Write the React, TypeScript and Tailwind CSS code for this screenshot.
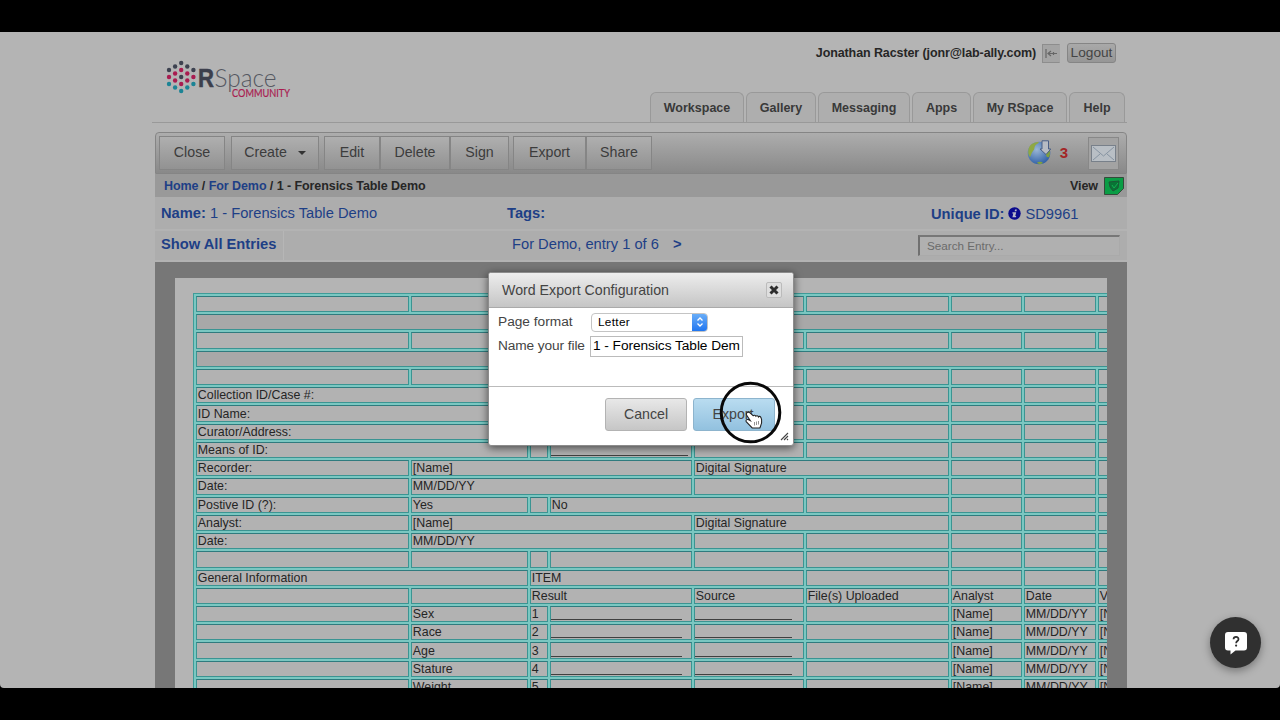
import React from "react";

type Cell = { span: number; text?: string; line?: string; shade?: boolean };

const e = (span = 1): Cell => ({ span });
const t = (text: string, span = 1): Cell => ({ span, text });
const LONG = "w-[137px]";
const MID = "w-[131px]";
const SHORT = "w-[97px]";

const plain: Cell[] = [e(), e(), e(), e(), e(), e(), e(), e(), e()];
const full: Cell[] = [{ span: 9, shade: true }];
const wide = (label: string): Cell[] => [t(label, 4), e(), e(), e(), e(), e()];
const signed = (label: string): Cell[] => [t(label), t("[Name]", 3), t("Digital Signature", 2), e(), e(), e()];
const dated: Cell[] = [t("Date:"), t("MM/DD/YY", 3), e(), e(), e(), e(), e()];
const item = (label: string, n: string): Cell[] => [
  e(), t(label), t(n), { span: 1, line: MID }, { span: 1, line: SHORT }, e(), t("[Name]"), t("MM/DD/YY"), t("[Name]"),
];

const rows: Cell[][] = [
  [e(), e(4), e(), e(), e(), e()],
  full,
  [e(), e(4), e(), e(), e(), e()],
  full,
  [e(), e(4), e(), e(), e(), e()],
  wide("Collection ID/Case #:"),
  wide("ID Name:"),
  wide("Curator/Address:"),
  [t("Means of ID:", 2), e(), { span: 1, line: LONG }, e(), e(), e(), e(), e()],
  signed("Recorder:"),
  dated,
  [t("Postive ID (?):"), t("Yes"), e(), t("No", 2), e(), e(), e(), e()],
  signed("Analyst:"),
  dated,
  plain,
  [t("General Information", 2), t("ITEM", 3), e(), e(), e(), e()],
  [e(), e(), t("Result", 2), t("Source"), t("File(s) Uploaded"), t("Analyst"), t("Date"), t("Verified")],
  item("Sex", "1"),
  item("Race", "2"),
  item("Age", "3"),
  item("Stature", "4"),
  item("Weight", "5"),
];

const spans: Record<number, string> = {
  1: "col-span-1", 2: "col-span-2", 3: "col-span-3", 4: "col-span-4", 9: "col-span-9",
};

function FormTable() {
  return (
    <div className="ml-[18px] mt-[15px] w-[1000px] border border-[#3f9c99] bg-[#7ac7c1] p-[2px]">
      <div className="grid auto-rows-[16.235px] grid-cols-[213px_117px_18px_142px_110px_143px_71px_72px_80px] gap-[2px]">
        {rows.flatMap((row, r) =>
          row.map((c, i) => (
            <div
              key={`${r}-${i}`}
              className={`${spans[c.span]} ${c.shade ? "bg-[#a8a8a8]" : "bg-[#b2b2b2]"} flex items-center overflow-hidden whitespace-nowrap border border-[#3b9492] border-t-[#2f7b7e] text-[12.4px] leading-[14px] text-[#252525]`}
            >
              {c.text && <span className="pl-[0.8px]">{c.text}</span>}
              {c.line && <span className={`${c.line} mb-px h-px self-end bg-[#404040]`} />}
            </div>
          ))
        )}
      </div>
    </div>
  );
}

const hex = [
  [2, 0, 0], [1, 1, 0], [3, 1, 0], [0, 2, 0], [2, 2, 1], [4, 2, 0],
  [1, 3, 1], [3, 3, 1], [0, 4, 1], [2, 4, 0], [4, 4, 1], [1, 5, 1], [3, 5, 1],
  [0, 6, 2], [2, 6, 1], [4, 6, 2], [1, 7, 2], [3, 7, 2], [2, 8, 2],
];
const hexColors = ["#3d4250", "#a91c50", "#1c8495"];

function Logo() {
  return (
    <svg width="128" height="42" viewBox="0 0 128 42" className="block">
      {hex.map(([x, y, c], i) => (
        <circle key={i} cx={5 + x * 6.1} cy={4 + y * 3.5} r="2.2" fill={hexColors[c]} />
      ))}
      <text x="34" y="27.500" fontFamily="Liberation Sans, sans-serif" fontWeight="bold" fontSize="26" textLength="16" lengthAdjust="spacingAndGlyphs" fill="#3c3f4c" stroke="#3c3f4c" strokeWidth=".5">R</text>
      <text x="50.500" y="27.500" fontFamily="Lato, sans-serif" fontWeight="300" fontSize="26" textLength="62" lengthAdjust="spacingAndGlyphs" fill="#555861">Space</text>
      <text x="68" y="38" fontFamily="Lato, sans-serif" fontSize="10.500" textLength="58" lengthAdjust="spacingAndGlyphs" fill="#a91c50" stroke="#a91c50" strokeWidth=".2">COMMUNITY</text>
    </svg>
  );
}

function Tab({ label, w }: { label: string; w: string }) {
  return (
    <div className={`${w} flex h-[30px] items-center justify-center rounded-t-md border border-b-0 border-[#999] bg-[#aeaeae] pt-px text-[12.5px] font-bold text-[#393939]`}>
      {label}
    </div>
  );
}

function Tool({ label, w, caret }: { label: string; w: string; caret?: boolean }) {
  return (
    <div className={`${w} flex h-[34px] items-center justify-center border border-[#858585] bg-linear-to-b from-[#afafaf] to-[#929292] text-[14.2px] text-[#3c3c3c]`}>
      {label}
      {caret && <span className="ml-[11px] h-0 w-0 border-x-4 border-t-4 border-x-transparent border-t-[#333]" />}
    </div>
  );
}

function Globe() {
  return (
    <svg width="24" height="26" viewBox="0 0 24 26">
      <defs>
        <radialGradient id="sea" cx=".4" cy=".35" r=".7">
          <stop offset="0" stopColor="#9bb7d6" />
          <stop offset="1" stopColor="#2d5da4" />
        </radialGradient>
      </defs>
      <circle cx="12" cy="13" r="11.300" fill="url(#sea)" />
      <path d="M1.500 9C3 4 7 2 12 2c-1 2-3 2-4 4s0 3-2 5-2 5-3 6c-2-2-2-5-1.500-8z" fill="#8fa843" />
      <path d="M20 6c3 3 4 8 2 11-2 1-3-1-3-3s2-4 1-8zM10 23c2-2 5-1 6 0-2 1.500-4 1.500-6 0z" fill="#7f9f40" />
      <path d="M15 .8h6.500V9h2.300L19 14.500 13 9h2z" fill="#b7bbc3" stroke="#4b5e85" strokeWidth="1" />
    </svg>
  );
}

function Dialog() {
  return (
    <div className="absolute left-[488px] top-[272px] flex h-[174px] w-[306px] flex-col rounded-[3px] border border-[#8c8c8c] bg-white text-[#444] shadow-[0_2px_8px_rgba(0,0,0,0.6)]">
      <div className="flex h-[35px] items-center justify-between rounded-t-[2px] border-b border-[#aaa] bg-linear-to-b from-[#ededed] to-[#c5c5c5] pl-[13px] pr-[11px]">
        <span className="pt-[2px] text-[14.2px]">Word Export Configuration</span>
        <span className="flex h-4 w-4 items-center justify-center rounded-[2px] border border-[#bbb] bg-[#dedede]">
          <svg width="10" height="10" viewBox="0 0 10 10"><path d="M1.500 1.500l7 7M8.500 1.500l-7 7" stroke="#2d2d2d" strokeWidth="3" /></svg>
        </span>
      </div>
      <div className="flex h-[78px] flex-col pl-[9px] pt-[4px] text-[13.7px]">
        <div className="flex h-[20px] items-center">
          <span className="w-[93px] pt-px">Page format</span>
          <span className="flex h-[19px] w-[117px] items-center justify-between overflow-hidden rounded-[4px] border border-[#c4c4c4] pl-[6px] text-[11.800px] tracking-[0.3px] text-black">
            <span className="pt-px">Letter</span>
            <span className="-mr-px flex h-[19px] w-[16px] items-center justify-center rounded-r-[4px] bg-linear-to-b from-[#6cb0f8] to-[#1a72ef]">
              <svg width="8" height="12" viewBox="0 0 8 12"><path d="M1.500 4.500L4 2l2.500 2.500M1.500 7.500L4 10l2.500-2.500" fill="none" stroke="white" strokeWidth="1.300" /></svg>
            </span>
          </span>
        </div>
        <div className="mt-[4px] flex h-[21px] items-center">
          <span className="w-[92px] whitespace-nowrap tracking-[-0.1px]">Name your file</span>
          <span className="h-[21px] w-[153px] overflow-hidden whitespace-nowrap border border-[#bbb] pl-[2px] leading-[18px] tracking-[-0.05px] text-black">1 - Forensics Table Dem</span>
        </div>
      </div>
      <div className="flex h-[59px] gap-[6px] border-t border-[#bbb] pl-[116px] pt-[11px] text-[14.2px]">
        <div className="flex h-[33px] w-[82px] items-center justify-center rounded-[3px] border border-[#b3b3b3] bg-linear-to-b from-[#e8e8e8] to-[#c6c6c6] pt-px">Cancel</div>
        <div className="flex h-[33px] w-[82px] items-center justify-center rounded-[3px] border border-[#8db4cd] bg-linear-to-b from-[#b9dcf0] to-[#92c1df] pr-[2px] pt-px">Export</div>
      </div>
      <svg className="absolute bottom-[4px] right-[4px]" width="9" height="9" viewBox="0 0 9 9"><path d="M1 8L8 1M4 8l4-4M7 8l1-1" stroke="#444" strokeWidth="1.100" /></svg>
      <svg className="absolute left-[230px] top-[108px]" width="64" height="64" viewBox="0 0 64 64">
        <circle cx="31.500" cy="31.500" r="29.300" fill="none" stroke="#080808" strokeWidth="3" />
        <path d="M28.500 31.500c-1.300.5-1.500 1.800-.8 2.800l3.600 5.300-2.200-1c-1.600-.6-2.800.9-1.700 2.200l5.800 6.200h7.600c1.200-2.800 2.500-4.700 1.800-8.300l-.6-2c-.6-1.600-2-1.700-2.600-.8-.4-1.300-1.900-1.500-2.500-.7-.6-1.200-2-1.300-2.700-.5l-3.200-2.800c-.7-.6-1.600-.8-2.500-.4z" fill="#fff" stroke="#222" strokeWidth="1.100" />
        <path d="M35.500 41v3.500M37.500 40.500V44M39.500 40v3.500" stroke="#777" strokeWidth=".8" />
      </svg>
    </div>
  );
}

export default function App() {
  return (
    <div className="relative flex h-[720px] w-[1280px] flex-col overflow-hidden bg-black py-8 font-['Liberation_Sans',Arial,sans-serif]">
      <div className="flex h-[656px] flex-col items-center overflow-hidden rounded-b-[4px] bg-[#b4b4b4]">
        <header className="mr-px flex h-[91px] w-[975px] shrink-0 justify-between border-b border-[#999]">
          <div className="pl-[12px] pt-[27px]"><Logo /></div>
          <div className="flex flex-col items-end justify-between">
            <div className="mr-[11px] mt-[11px] flex h-5 items-center">
              <span className="mr-[6px] pt-px text-[12.5px] font-bold tracking-[-0.1px] text-[#262626]">Jonathan Racster (jonr@lab-ally.com)</span>
              <span className="mr-[7px] flex h-[19px] w-[18px] items-center justify-center border border-[#8d8d8d] border-r-transparent bg-[#a4a4a4]">
                <svg width="12" height="9" viewBox="0 0 12 9"><path d="M1 0v9M3 4.500h9M6 2L3 4.500 6 7M8.500 3v3" fill="none" stroke="#666" strokeWidth="1.200" /></svg>
              </span>
              <span className="flex h-[20px] w-[49px] items-center justify-center rounded-[3px] border border-[#858585] bg-linear-to-b from-[#a9a9a9] to-[#969696] pt-px text-[13.7px] text-[#444]">Logout</span>
            </div>
            <div className="mr-[2px] flex gap-[2px]">
              <Tab label="Workspace" w="w-[94px]" />
              <Tab label="Gallery" w="w-[70px]" />
              <Tab label="Messaging" w="w-[92px]" />
              <Tab label="Apps" w="w-[59px]" />
              <Tab label="My RSpace" w="w-[94px]" />
              <Tab label="Help" w="w-[56px]" />
            </div>
          </div>
        </header>
        <main className="mt-[9px] flex min-h-0 w-[972px] flex-1 translate-x-[1px] flex-col">
          <div className="flex h-[42px] shrink-0 items-center justify-between rounded-t-[4px] border border-[#858585] bg-linear-to-b from-[#adadad] to-[#898989] pl-[3px] pr-[7px]">
            <div className="flex items-center">
              <Tool label="Close" w="w-[66px]" />
              <div className="w-[6px]" />
              <Tool label="Create" w="w-[88px]" caret />
              <div className="w-[5px]" />
              <Tool label="Edit" w="w-[56px]" />
              <Tool label="Delete" w="w-[70px]" />
              <Tool label="Sign" w="w-[59px]" />
              <div className="w-[4px]" />
              <Tool label="Export" w="w-[73px]" />
              <Tool label="Share" w="w-[66px]" />
            </div>
            <div className="flex items-center">
              <Globe />
              <span className="ml-[9px] mr-[20px] text-[15px] font-bold text-[#a32626]">3</span>
              <span className="flex h-[33px] w-[31px] items-center justify-center border border-[#888] bg-[#a3a3a3]">
                <svg width="25" height="17" viewBox="0 0 25 17"><rect x=".5" y=".5" width="24" height="16" fill="#b9bfc5" stroke="#78808a" /><path d="M2 2l10.500 9L23 2M2 15l7-6M23 15l-7-6" fill="none" stroke="#8794a2" /></svg>
              </span>
            </div>
          </div>
          <div className="flex h-[23px] shrink-0 items-center justify-between bg-[#999] pl-[9px] pr-[3px] text-[12.5px] font-bold tracking-[-0.07px] text-[#262626]">
            <span className="pt-[2px]"><span className="text-[#1e3f86]">Home</span> / <span className="text-[#1e3f86]">For Demo</span> / 1 - Forensics Table Demo</span>
            <span className="flex items-center gap-[6px]">
              <span className="pt-[2px]">View</span>
              <svg width="20" height="18" viewBox="0 0 20 18"><path d="M.5.5h19v11l-6 6H.5z" fill="#0a9d45" stroke="#344b3b" /><path d="M5 5l10-1-1 7-5 3-3-4z" fill="#087535" stroke="#1d5636" /><path d="M8 8l2 3 4-5" fill="none" stroke="#16ad55" /></svg>
            </span>
          </div>
          <div className="flex h-[32px] shrink-0 items-center bg-[#adadad] pl-[6px] text-[14.7px] text-[#1e3f86]">
            <span className="w-[346px] pt-px"><b>Name:</b> 1 - Forensics Table Demo</span>
            <span className="w-[424px] pt-px"><b>Tags:</b></span>
            <span className="flex items-center pt-[2px]"><b>Unique ID:</b>
              <svg className="mx-[4px]" width="13" height="13" viewBox="0 0 13 13"><circle cx="6.500" cy="6.500" r="6.200" fill="#0b0b8d" /><path d="M7 2.500h1.800L8.500 4.200H6.700zM4.500 5.300h3.700L7.300 9h1l-.4 1.300H4.400L5.300 6.500H4.300z" fill="#b9b9c9" /></svg>
              SD9961
            </span>
          </div>
          <div className="flex h-[33px] shrink-0 items-center border-y-2 border-[#b3b3b3] bg-[#adadad] pl-[6px] text-[14.7px] text-[#1e3f86]">
            <b className="flex h-full w-[123px] items-center border-r border-[#b6b6b6] pb-[3px]">Show All Entries</b>
            <span className="w-[634px] pb-[3px] pl-[228px]">For Demo, entry 1 of 6 <b className="ml-[10px]">&gt;</b></span>
            <span className="mb-[1px] flex h-[21px] w-[202px] items-center border border-l-2 border-t-2 border-[#aaa] border-l-[#707070] border-t-[#777] bg-[#b0b0b0] pl-[7px] text-[11.700px] text-[#6b6b6b]">Search Entry...</span>
          </div>
          <div className="flex min-h-0 flex-1 justify-center overflow-hidden bg-[#777] pt-[16px]">
            <div className="h-full w-[932px] overflow-hidden bg-[#b4b4b4]"><FormTable /></div>
          </div>
        </main>
      </div>
      <Dialog />
      <div className="absolute left-[1210px] top-[617px] flex h-[51px] w-[51px] items-center justify-center rounded-full bg-[#303030] shadow-[0_3px_8px_rgba(0,0,0,0.35)]">
        <svg width="24" height="24" viewBox="0 0 24 24"><path d="M4 1h16a3 3 0 013 3v12.500a3 3 0 01-3 3H11.500L6.500 23.500v-4H4a3 3 0 01-3-3V4a3 3 0 013-3z" fill="#fff" /><path d="M9.500 8.200c.2-3.300 5.300-3 5 .1-.2 1.800-2.300 1.700-2.400 3.900" fill="none" stroke="#303030" strokeWidth="1.700" /><circle cx="12.100" cy="14.600" r="1.100" fill="#303030" /></svg>
      </div>
    </div>
  );
}
